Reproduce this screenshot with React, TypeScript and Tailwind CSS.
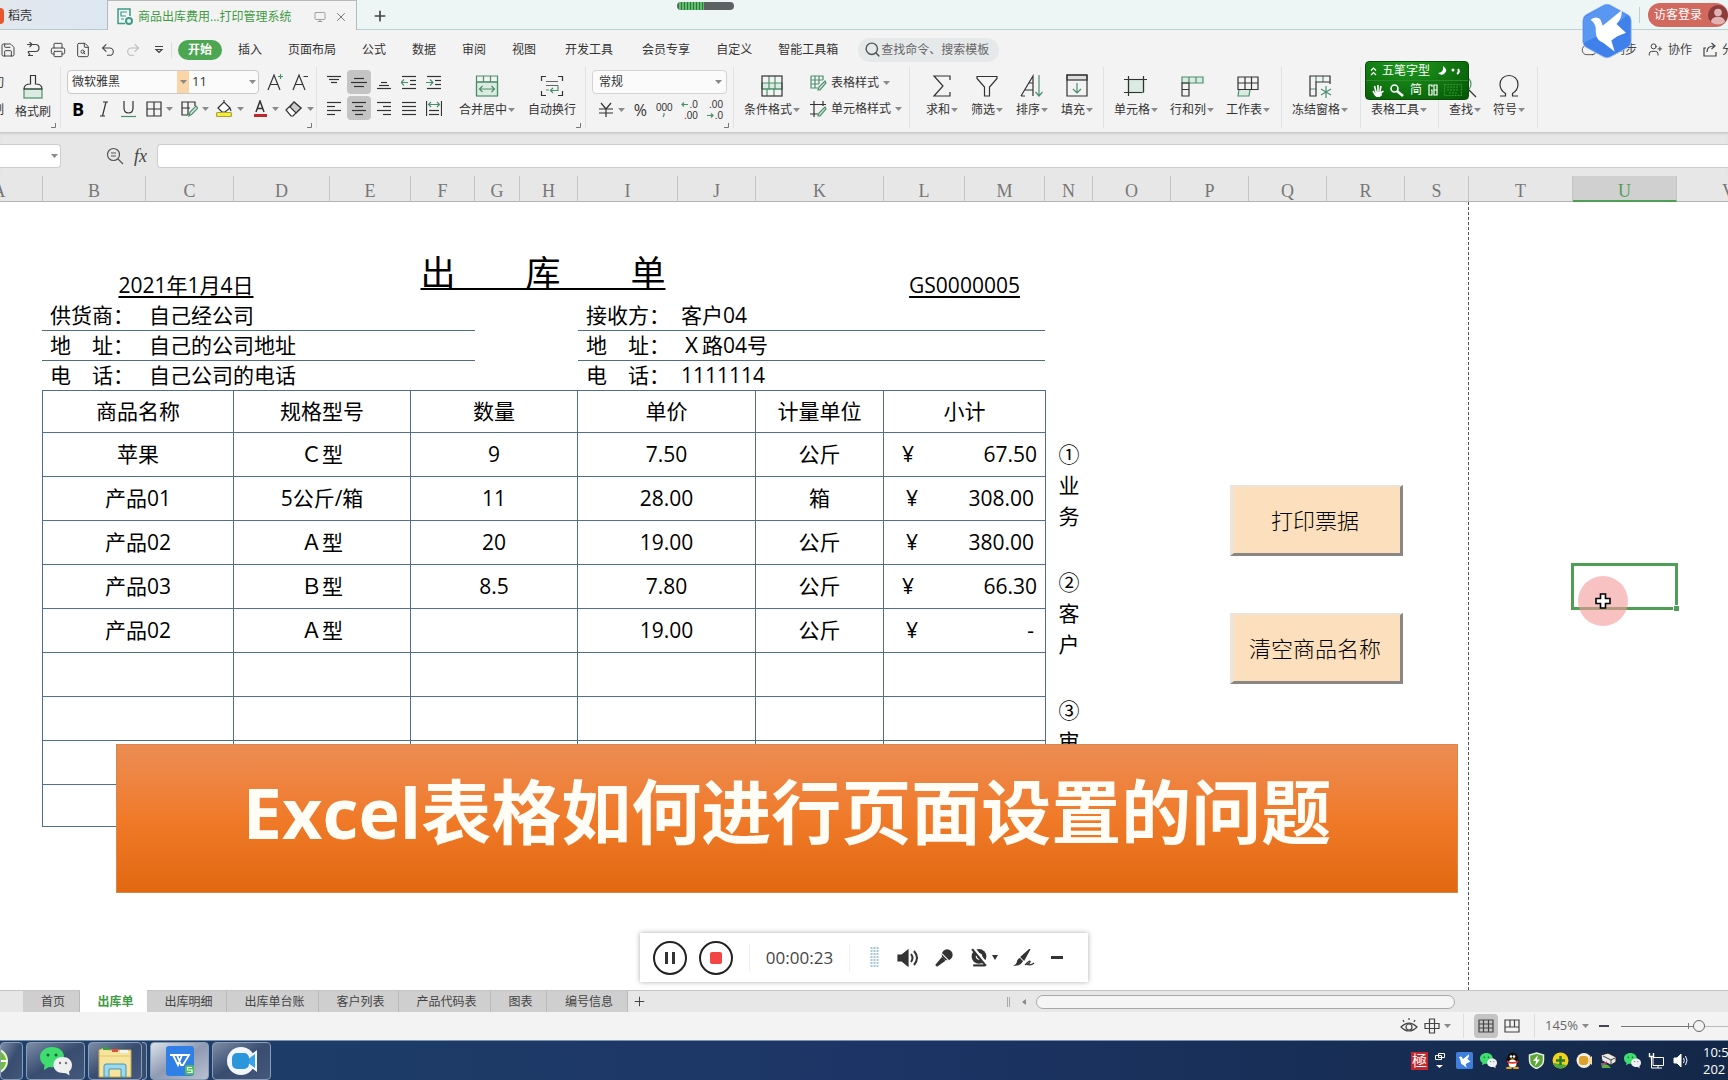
import type { ReactNode } from "react";
import clsx from "clsx";
import { Plus, X, Save, Printer, FileSearch, Undo2, Redo2, Search, Monitor, UserPlus, Cloud } from "lucide-react";

interface IcoProps {
  w?: number;
  h?: number;
  box?: string;
  className?: string;
  children: ReactNode;
}

function Ico({ w = 24, h, box = "0 0 24 24", className, children }: IcoProps) {
  return (
    <svg
      width={w}
      height={h ?? w}
      viewBox={box}
      fill="none"
      stroke="currentColor"
      strokeWidth={1.2}
      className={clsx("shrink-0", className)}
      aria-hidden="true"
    >
      {children}
    </svg>
  );
}

const GREEN = "#4c8f6b";
const MINT = "#dcebe2";

function Caret({ className }: { className?: string }) {
  return (
    <svg width="7" height="4" viewBox="0 0 7 4" className={clsx("shrink-0 fill-[#8a8a8a]", className)} aria-hidden="true">
      <path d="M0 0h7L3.5 4z" />
    </svg>
  );
}

function Corner() {
  return (
    <svg width="5" height="5" viewBox="0 0 5 5" className="absolute right-1 bottom-0 stroke-[#777]" fill="none" aria-hidden="true">
      <path d="M0 4.5h4.5V0" />
    </svg>
  );
}

/* ---------- ribbon icons ---------- */

const icons = {
  brush: (
    <Ico h={26} box="0 0 24 26">
      <rect x="3" y="15" width="18" height="9" fill={MINT} stroke={GREEN} />
      <path d="M9.5 10V1.500h5V10q6.500 0 6.500 5H3q0-5 6.500-5z" />
    </Ico>
  ),
  merge: (
    <Ico>
      <rect x="1.500" y="8" width="21" height="14" fill={MINT} stroke={GREEN} />
      <path d="M1.500 22V2h21v20M1.500 8h21M8.500 2v6M15.500 2v6" stroke={GREEN} />
      <path d="M4.500 15h15M7.500 12l-3 3 3 3M16.500 12l3 3-3 3" stroke={GREEN} />
    </Ico>
  ),
  wrap: (
    <Ico>
      <path d="M1.500 7V2.500H6M18 2.500h4.500V7M1.500 17v4.500H6M18 21.500h4.500V17" />
      <path d="M6 7.500h12M6 11.500h12" stroke="#666" />
      <path d="M18 11.500v5h-7M13 14l-2.500 2.500L13 19M6 16h3" stroke={GREEN} />
    </Ico>
  ),
  condition: (
    <Ico>
      <path d="M2 9h20v6H2z" fill={MINT} stroke={GREEN} />
      <path d="M9 2v7M15 9v6M7 15v7M15 2v7M9 9v6M2 15h20M14 15v7" stroke={GREEN} />
      <rect x="2" y="2" width="20" height="20" />
    </Ico>
  ),
  sum: <Ico><path d="M20 6V2H4l9 10-9 10h16v-4" /></Ico>,
  filter: <Ico><path d="M2 2.500h20v2l-7.500 8.500v9h-5v-9L2 4.500z" /></Ico>,
  sort: (
    <Ico>
      <path d="M1 22L13 2v20M5 16h8M9 9h4M1 22h4" />
      <path d="M19 1v21M15.500 18l3.500 4 3.500-4" stroke={GREEN} />
    </Ico>
  ),
  fill: (
    <Ico>
      <rect x="2" y="1" width="20" height="5" fill="#ddd" />
      <path d="M2 1h20v21H2z" />
      <path d="M12 9v10M8 15l4 4 4-4" stroke={GREEN} />
    </Ico>
  ),
  cell: (
    <Ico>
      <rect x="4.500" y="5.500" width="15" height="13" fill={MINT} stroke={GREEN} />
      <path d="M4.500 2v20M19.500 2v16M0 5.500h23M0 18.500h18" />
    </Ico>
  ),
  rowcol: (
    <Ico>
      <path d="M2 3h21v6H2z" fill={MINT} stroke={GREEN} />
      <path d="M9 3v6M16 3v6" stroke={GREEN} />
      <path d="M2 9h7v13H2zM2 15.500h7" />
    </Ico>
  ),
  sheet: (
    <Ico>
      <path d="M3 15.500h11l-1 6.500H2z" fill={MINT} stroke={GREEN} />
      <path d="M2 3h20v12.500H2zM2 9h20M9 3v12.500M15.500 3v12.500" />
    </Ico>
  ),
  freeze: (
    <Ico>
      <path d="M8 2v6M15 2v6M2 15h6" stroke={GREEN} />
      <path d="M22 10V2H2v20h6V8h14" />
      <path d="M18 12v12M13 15l10 6M23 15l-10 6" stroke={GREEN} />
    </Ico>
  ),
  tools: <Ico><path d="M3 3h18v18H3zM3 9h18M9 3v18" /></Ico>,
  find: (
    <Ico>
      <circle cx="10" cy="10" r="8" stroke={GREEN} />
      <path d="M16 16l7 7" />
    </Ico>
  ),
  omega: <Ico><path d="M3 22h5.500v-2.500C4.500 17 3 14 3 10.500 3 5 7 1.500 12 1.500S21 5 21 10.500c0 3.500-1.500 6.500-5.500 9V22H21" /></Ico>,
};

type Lines = [number, number, number][];

function LineIcon({ lines, children }: { lines: Lines; children?: ReactNode }) {
  return (
    <Ico w={16} box="0 0 16 16">
      {lines.map(([x1, x2, y]) => (
        <path key={y} d={`M${x1} ${y}H${x2}`} />
      ))}
      {children}
    </Ico>
  );
}

const alignTop = [
  { label: "顶端对齐", on: false, icon: <LineIcon lines={[[1, 15, 2.5], [3, 13, 5.5], [5, 11, 8.5]]} /> },
  { label: "垂直居中", on: true, icon: <LineIcon lines={[[3, 13, 4.5], [0, 16, 8.5], [3, 13, 12.5]]} /> },
  { label: "底端对齐", on: false, icon: <LineIcon lines={[[5, 11, 8.5], [3, 13, 11.5], [1, 15, 14.5]]} /> },
  {
    label: "减少缩进",
    on: false,
    icon: (
      <LineIcon lines={[[1, 15, 2.5], [9, 15, 6.5], [9, 15, 10.5], [1, 15, 14.5]]}>
        <path d="M0 8.500h7M3 5.500l-3 3 3 3" stroke={GREEN} />
      </LineIcon>
    ),
  },
  {
    label: "增加缩进",
    on: false,
    icon: (
      <LineIcon lines={[[1, 15, 2.5], [9, 15, 6.5], [9, 15, 10.5], [1, 15, 14.5]]}>
        <path d="M0 8.500h7M4 5.500l3 3-3 3" stroke={GREEN} />
      </LineIcon>
    ),
  },
];

const alignBottom = [
  { label: "左对齐", on: false, icon: <LineIcon lines={[[1, 15, 2.5], [1, 9, 6.5], [1, 15, 10.5], [1, 9, 14.5]]} /> },
  { label: "水平居中", on: true, icon: <LineIcon lines={[[1, 15, 2.5], [4, 12, 6.5], [1, 15, 10.5], [4, 12, 14.5]]} /> },
  { label: "右对齐", on: false, icon: <LineIcon lines={[[1, 15, 2.5], [7, 15, 6.5], [1, 15, 10.5], [7, 15, 14.5]]} /> },
  { label: "两端对齐", on: false, icon: <LineIcon lines={[[1, 15, 2.5], [1, 15, 6.5], [1, 15, 10.5], [1, 15, 14.5]]} /> },
  {
    label: "分散对齐",
    on: false,
    icon: (
      <LineIcon lines={[[3, 13, 10.5], [3, 13, 14.5]]}>
        <path d="M0.500 1v15M15.500 1v15" />
        <path d="M3 4.500h10M5 2L2.500 4.500 5 7M11 2l2.500 2.500L11 7" stroke={GREEN} />
      </LineIcon>
    ),
  },
];

function Group({ className, children, last }: { className?: string; children: ReactNode; last?: boolean }) {
  return (
    <div className={clsx("relative flex h-[61px] shrink-0 border-r border-[#dfe3e3]", last && "pr-3", className)}>
      {children}
    </div>
  );
}

function BigButton({ icon, label, caret = true }: { icon: ReactNode; label: string; caret?: boolean }) {
  return (
    <button className="flex shrink-0 flex-col items-center gap-1 whitespace-nowrap pt-[7px]">
      {icon}
      <span className="flex items-center gap-px leading-4">
        {label}
        {caret && <Caret />}
      </span>
    </button>
  );
}

function TitleBar() {
  return (
    <header className="flex h-[30px] shrink-0 items-end bg-[#eef5f5] text-xs">
      <button className="flex h-full w-[107px] items-center gap-1 border-b border-[#b5cccd] bg-linear-to-r from-[#e3e8ee] to-[#dde7f2] pt-[3px]">
        <span className="h-4 w-1 rounded-r-full bg-[#e8542c]" />
        稻壳
      </button>
      <div className="flex h-full w-[250px] items-center border-x border-t border-[#b5b9ba] bg-[#f3f3f3] pt-0.5 pl-2 text-[#3f9a44]">
        <Ico w={18} box="0 0 18 18" className="text-[#3a9d86]">
          <path d="M9 15.500H2V1h12v7" strokeWidth={1.500} />
          <path d="M11 4H5v4h5M5 11h3" />
          <circle cx="13" cy="13" r="3" strokeWidth={2} />
        </Ico>
        <span className="ml-1 whitespace-nowrap">商品出库费用...打印管理系统</span>
        <Monitor size={12} strokeWidth={1.5} className="ml-[23px] text-[#888]" />
        <button aria-label="关闭标签" className="ml-2">
          <X size={14} strokeWidth={1.5} className="text-[#666]" />
        </button>
      </div>
      <div className="flex h-full flex-1 items-center border-b border-[#b9d3d3] pt-0.5 pl-[15px]">
        <button aria-label="新建标签">
          <Plus size={16} strokeWidth={2.5} className="text-[#444]" />
        </button>
      </div>
      <div className="flex h-full items-center border-b border-[#b9d3d3]">
        <span className="h-4 border-l border-[#b9d3d3]" />
        <button className="ml-2 flex h-6 w-[80px] items-center justify-between rounded-l-full rounded-r-full bg-[#d1695f] pl-1.5 text-white">
          <span className="whitespace-nowrap">访客登录</span>
          <svg width="20" height="20" viewBox="0 0 20 20" aria-hidden="true">
            <circle cx="10" cy="10" r="10" fill="#8d3c3c" />
            <circle cx="10" cy="7.500" r="3.800" fill="#e3b3b3" />
            <path d="M3 17c0-7 14-7 14 0a10 10 0 0 1-14 0z" fill="#e3b3b3" />
          </svg>
        </button>
      </div>
    </header>
  );
}

const menusA = ["插入", "页面布局", "公式", "数据", "审阅", "视图"];
const menusB = ["开发工具", "会员专享"];
const menusC = ["自定义", "智能工具箱"];

function MenuBar() {
  return (
    <nav className="flex h-[37px] shrink-0 items-center whitespace-nowrap pt-0.5 text-xs">
      <div className="flex w-[172px] items-center gap-[9px] border-r border-[#ddd] text-[#444]">
        <button aria-label="保存"><Save size={16} strokeWidth={1.5} /></button>
        <button aria-label="导出">
          <Ico w={16} box="0 0 16 16"><path d="M3 9.500h7.500a3.500 3.500 0 0 0 0-7H2M4.500 0L7 2.500 4.500 5M3 13.500h5M3 9.500l2 4" /></Ico>
        </button>
        <button aria-label="打印"><Printer size={16} strokeWidth={1.5} /></button>
        <button aria-label="打印预览"><FileSearch size={16} strokeWidth={1.5} /></button>
        <button aria-label="撤销"><Undo2 size={16} strokeWidth={1.6} /></button>
        <button aria-label="恢复" className="text-[#bbb]"><Redo2 size={16} strokeWidth={1.6} /></button>
        <button aria-label="更多" className="ml-1">
          <Ico w={10} box="0 0 10 10"><path d="M1 1.500h8M2 4.500L5 7.500l3-3z" /></Ico>
        </button>
      </div>
      <button className="ml-1.5 h-5 w-11 rounded-full bg-[#4da652] font-bold text-white">开始</button>
      <div className="ml-4 flex gap-[26px]">
        {menusA.map((m) => <button key={m}>{m}</button>)}
      </div>
      <div className="ml-[29px] flex gap-[29px]">
        {menusB.map((m) => <button key={m}>{m}</button>)}
      </div>
      <div className="ml-[26px] flex gap-[26px]">
        {menusC.map((m) => <button key={m}>{m}</button>)}
      </div>
      <label className="ml-5 flex h-6 w-[141px] items-center rounded-full bg-[#e6e9ea] pl-1.5">
        <Search size={17} strokeWidth={2} className="shrink-0 text-[#555]" />
        <input
          aria-label="查找命令"
          placeholder="查找命令、搜索模板"
          className="w-full min-w-0 bg-transparent outline-none placeholder:text-[#666]"
        />
      </label>
      <div className="ml-auto flex items-center text-[#444]">
        <Cloud size={16} strokeWidth={1.3} />
        <button className="ml-4">同步</button>
        <UserPlus size={15} strokeWidth={1.6} className="ml-[11px]" />
        <button className="ml-[5px]">协作</button>
        <Ico w={15} box="0 0 15 15" className="ml-[11px]">
          <path d="M3 6H1v8h12v-4M4 10q0-6 7-6M8.500 1L12 4 8.500 7" />
        </Ico>
        <button className="ml-1 w-1.5 overflow-hidden">分</button>
      </div>
    </nav>
  );
}

function Ribbon() {
  return (
    <div className="flex h-[65px] shrink-0 overflow-hidden whitespace-nowrap text-xs text-[#333]">
      <Group className="w-[61px] pl-[15px]">
        <div className="absolute top-2 left-0 flex w-1 flex-col gap-[11px] overflow-hidden leading-4">
          <span className="-ml-2">切</span>
          <span className="-ml-2">制</span>
        </div>
        <BigButton icon={icons.brush} label="格式刷" caret={false} />
        <Corner />
      </Group>

      <Group className="w-64 flex-col pl-1.5">
        <div className="mt-[3px] flex h-6 items-center">
          <div className="flex h-6 w-[192px] rounded-sm border border-[#c9c9c9] bg-[#fbfbfb]">
            <label className="relative flex w-[121px] items-center">
              <select aria-label="字体" className="h-full w-full appearance-none pl-1 outline-none">
                <option>微软雅黑</option>
              </select>
              <span className="pointer-events-none absolute right-0 flex h-full w-3 items-center justify-center bg-[#fad5a5]">
                <Caret />
              </span>
            </label>
            <label className="relative flex flex-1 items-center">
              <select aria-label="字号" className="h-full w-full appearance-none pl-[3px] text-[13px] outline-none">
                <option>11</option>
              </select>
              <Caret className="pointer-events-none absolute right-0.5" />
            </label>
          </div>
          <button aria-label="增大字号" className="ml-2">
            <Ico w={17} h={18} box="0 0 17 18">
              <path d="M1 17L7 2l6 15M3.500 11.500h7" />
              <path d="M11 3.500h5M13.500 1v5" stroke={GREEN} />
            </Ico>
          </button>
          <button aria-label="减小字号" className="ml-2">
            <Ico w={17} h={18} box="0 0 17 18"><path d="M1 17L7 2l6 15M3.500 11.500h7M11.500 3.500H16" /></Ico>
          </button>
        </div>
        <div className="mt-[5px] flex h-5 items-center pl-[5px]">
          <button className="w-5 text-left text-lg leading-5 font-bold text-black">B</button>
          <button aria-label="倾斜" className="ml-1">
            <Ico w={16} h={18} box="0 0 16 18"><path d="M7 2h5M4 16h5M10 2L6.500 16" /></Ico>
          </button>
          <button aria-label="下划线" className="ml-2">
            <Ico w={18} box="0 0 18 18"><path d="M4 1v7q0 5 4.500 5T13 8V1" /><path d="M1 16.500h15" stroke={GREEN} /></Ico>
          </button>
          <button className="ml-2 flex items-center gap-1" aria-label="边框">
            <Ico w={16} box="0 0 16 16"><path d="M1 1h14v14H1zM8 1v14M1 8h14" /></Ico>
            <Caret />
          </button>
          <button className="ml-2 flex items-center gap-1" aria-label="绘制边框">
            <Ico w={17} box="0 0 17 17">
              <path d="M7 14H1V1h13v4M1 7h8M7 1v13" />
              <path d="M8 15l1-4 6-6 2 2-6 6z" fill={MINT} stroke={GREEN} />
            </Ico>
            <Caret />
          </button>
          <button className="ml-1.5 flex items-center gap-1" aria-label="填充颜色">
            <Ico w={18} box="0 0 18 18">
              <path d="M3 8l6-6 6 6-5 4H7zM9 2v-2M15 8l1 3" fill="#fff" />
              <rect x="1.500" y="12.500" width="15" height="4" rx="1" fill="#f6ee3c" stroke="#a9a43a" />
            </Ico>
            <Caret />
          </button>
          <button className="ml-2 flex items-center gap-1" aria-label="字体颜色">
            <Ico w={16} h={18} box="0 0 16 18">
              <path d="M4 12L8 1l4 11M5.500 8.500h5" strokeWidth={1.500} />
              <rect x="2" y="14" width="13" height="3" fill="#c0262d" stroke="none" />
            </Ico>
            <Caret />
          </button>
          <button className="ml-1.5 flex items-center gap-1" aria-label="清除">
            <Ico w={18} box="0 0 18 18">
              <path d="M1 10l8-8 7 6-8 8H6z" fill="#fff" />
              <path d="M9 2l7 6-5 5-6-6z" fill="#ccc" />
            </Ico>
            <Caret />
          </button>
        </div>
        <Corner />
      </Group>

      <Group className="w-[269px] pl-[5px]">
        <div className="flex flex-col gap-0.5 pt-[3px]">
          {[alignTop, alignBottom].map((row, i) => (
            <div key={i} className="flex gap-px">
              {row.map((b) => (
                <button
                  key={b.label}
                  aria-label={b.label}
                  className={clsx("flex h-6 w-6 items-center justify-center rounded-sm", b.on && "bg-[#c4c4c4]")}
                >
                  {b.icon}
                </button>
              ))}
            </div>
          ))}
        </div>
        <div className="ml-[13px] flex gap-[13px]">
          <BigButton icon={icons.merge} label="合并居中" />
          <BigButton icon={icons.wrap} label="自动换行" caret={false} />
        </div>
        <Corner />
      </Group>

      <Group className="w-[148px] flex-col px-1.5">
        <label className="relative mt-[3px] flex h-6 shrink-0 items-center rounded-sm border border-[#d3d3d3] bg-[#fbfbfb]">
          <select aria-label="数字格式" className="h-full w-full appearance-none pl-1.5 outline-none">
            <option>常规</option>
          </select>
          <Caret className="pointer-events-none absolute right-1" />
        </label>
        <div className="mt-[5px] flex h-[22px] items-center justify-between pr-1 pl-1.5">
          <button className="flex items-center gap-1" aria-label="货币">
            <Ico w={16} box="0 0 16 16"><path d="M3 1l5 6 5-6M1 7h14M1 11h14M8 7v8" /></Ico>
            <Caret />
          </button>
          <button className="text-base leading-5">%</button>
          <button aria-label="千位分隔样式" className="h-[22px] font-[Liberation_Sans,sans-serif] text-[10px] leading-[11px]">
            000
            <Ico w={4} h={5} box="0 0 4 5" className="mx-auto"><path d="M2 0v2L1 4" stroke={GREEN} /></Ico>
          </button>
          <button aria-label="增加小数位数" className="flex flex-col items-end font-[Liberation_Sans,sans-serif] text-[10px] leading-[11px]">
            <span className="flex items-center">
              <Ico w={7} h={5} box="0 0 7 5" className="mr-px"><path d="M7 2.500H1M3 .500l-2 2 2 2" stroke={GREEN} /></Ico>
              .0
            </span>
            <span>.00</span>
          </button>
          <button aria-label="减少小数位数" className="flex flex-col items-end font-[Liberation_Sans,sans-serif] text-[10px] leading-[11px]">
            <span>.00</span>
            <span className="flex items-center">
              <Ico w={7} h={5} box="0 0 7 5" className="mr-px"><path d="M0 2.500h6M4 .500l2 2-2 2" stroke={GREEN} /></Ico>
              .0
            </span>
          </button>
        </div>
        <Corner />
      </Group>

      <Group className="w-[176px] pl-2.5">
        <BigButton icon={icons.condition} label="条件格式" />
        <div className="ml-2.5 flex flex-col gap-2 pt-[7px]">
          <button className="flex h-[18px] items-center">
            <Ico w={17} box="0 0 17 17">
              <path d="M1 1h12v4M8 13H1V1M1 5h12M1 9h8M5 1v12M9 1v8" stroke={GREEN} />
              <path d="M8 15l1-3 6-6 1 2-6 7z" fill={MINT} stroke={GREEN} />
            </Ico>
            <span className="mr-1 ml-1">表格样式</span>
            <Caret />
          </button>
          <button className="flex h-[18px] items-center">
            <Ico w={17} box="0 0 17 17">
              <path d="M4 0v16M0 3.500h16M13 0v5M0 13h8" />
              <path d="M8 15l1-3 6-6 1 2-6 7z" fill={MINT} stroke={GREEN} />
            </Ico>
            <span className="mr-1 ml-1">单元格样式</span>
            <Caret />
          </button>
        </div>
      </Group>

      <Group className="w-[194px] gap-[13px] pl-4">
        <BigButton icon={icons.sum} label="求和" />
        <BigButton icon={icons.filter} label="筛选" />
        <BigButton icon={icons.sort} label="排序" />
        <BigButton icon={icons.fill} label="填充" />
      </Group>

      <Group className="w-[178px] gap-3 pl-2.5">
        <BigButton icon={icons.cell} label="单元格" />
        <BigButton icon={icons.rowcol} label="行和列" />
        <BigButton icon={icons.sheet} label="工作表" />
      </Group>

      <Group className="w-[79px] pl-2.5"><BigButton icon={icons.freeze} label="冻结窗格" /></Group>
      <Group className="w-[78px] pl-2.5"><BigButton icon={icons.tools} label="表格工具" /></Group>
      <Group last className="gap-3 pl-2.5">
        <BigButton icon={icons.find} label="查找" />
        <BigButton icon={icons.omega} label="符号" />
      </Group>
    </div>
  );
}

function FormulaBar() {
  return (
    <div className="flex h-11 shrink-0 items-center bg-[#e7e7e7] pt-1 shadow-[inset_0_3px_3px_-2px_#bbb]">
      <button aria-label="名称框" className="flex h-6 w-[61px] items-center justify-end rounded-r-sm border border-l-0 border-[#cdcdcd] bg-white pr-0.5">
        <Caret />
      </button>
      <Ico w={18} box="0 0 18 18" className="ml-[45px] text-[#555]">
        <circle cx="7.500" cy="7.500" r="6" />
        <path d="M12 12l5 5M5 6h5M5 9h5" />
      </Ico>
      <label htmlFor="fx" className="mr-2 ml-2.5 w-[15px] font-[Liberation_Serif,serif] text-lg leading-5 text-[#444] italic">
        fx
      </label>
      <input id="fx" className="h-6 min-w-0 flex-1 rounded-l-sm border border-r-0 border-[#cdcdcd] bg-white outline-none" />
    </div>
  );
}

const letters = "ABCDEFGHIJKLMNOPQRSTUV".split("");

function ColumnHeads() {
  return (
    <div className="grid h-[26px] shrink-0 grid-cols-[43px_103px_88px_96px_81px_64px_45px_58px_100px_78px_128px_81px_80px_48px_78px_78px_78px_78px_64px_104px_104px_104px] overflow-hidden bg-[#e7e7e7] font-[Liberation_Serif,serif] text-lg leading-[31px] text-[#777]">
      {letters.map((l) => (
        <div
          key={l}
          className={clsx(
            "h-[26px] border-r border-b text-center",
            l === "A" && "-ml-11",
            l === "U"
              ? "border-r-[#c4c4c4] border-b-2 border-b-[#4f9e55] bg-[#d0d0d0] text-[#4f9e55]"
              : "border-r-[#c4c4c4] border-b-[#b4b4b4]"
          )}
        >
          {l}
        </div>
      ))}
    </div>
  );
}

/* ---------- delivery note ---------- */

interface Item {
  name: string;
  spec: string;
  qty: string;
  price: string;
  unit: string;
  total: string;
  pad: string;
}

const wide = "pr-2 pl-[18px]";
const narrow = "pr-[11px] pl-[22px]";

const items: Item[] = [
  { name: "苹果", spec: "Ｃ型", qty: "9", price: "7.50", unit: "公斤", total: "67.50", pad: wide },
  { name: "产品01", spec: "5公斤/箱", qty: "11", price: "28.00", unit: "箱", total: "308.00", pad: narrow },
  { name: "产品02", spec: "Ａ型", qty: "20", price: "19.00", unit: "公斤", total: "380.00", pad: narrow },
  { name: "产品03", spec: "Ｂ型", qty: "8.5", price: "7.80", unit: "公斤", total: "66.30", pad: wide },
  { name: "产品02", spec: "Ａ型", qty: "", price: "19.00", unit: "公斤", total: "-", pad: narrow },
];

const heads = ["商品名称", "规格型号", "数量", "单价", "计量单位", "小计"];

const sender = [
  ["供货商：", "自己经公司"],
  ["地　址：", "自己的公司地址"],
  ["电　话：", "自己公司的电话"],
];
const receiver = [
  ["接收方：", "客户04"],
  ["地　址：", "Ｘ路04号"],
  ["电　话：", "1111114"],
];

function Party({ rows, className, term }: { rows: string[][]; className: string; term: string }) {
  return (
    <dl className={className}>
      {rows.map(([k, v]) => (
        <div key={k} className="flex h-[30px] items-center border-b border-[#4f6f80] pb-0.5 last:h-[29px] last:border-b-0">
          <dt className={clsx("pl-2", term)}>{k}</dt>
          <dd className="pl-[9px]">{v}</dd>
        </div>
      ))}
    </dl>
  );
}

const cell = "border border-[#4f6f90] pb-0.5";

function DeliveryNote() {
  return (
    <section className="w-[1003px] shrink-0 text-[21px] leading-7 text-black">
      <div className="grid h-[99px] grid-cols-[288px_426px_128px_161px] items-end text-center">
        <span className="pb-0.5 underline decoration-2 underline-offset-3">2021年1月4日</span>
        <h1 className="pb-1 text-[35px] leading-[48px] font-normal whitespace-pre underline decoration-2 underline-offset-2">出　　库　　单</h1>
        <span />
        <span className="pb-0.5 underline decoration-2 underline-offset-3">GS0000005</span>
      </div>
      <div className="flex">
        <Party rows={sender} className="w-[433px]" term="w-[98px]" />
        <Party rows={receiver} className="ml-[103px] w-[467px]" term="w-[94px]" />
      </div>
      <table className="w-full table-fixed border-collapse text-center">
        <colgroup>
          <col className="w-[191px]" />
          <col className="w-[177px]" />
          <col className="w-[167px]" />
          <col className="w-[178px]" />
          <col className="w-[128px]" />
          <col className="w-[162px]" />
        </colgroup>
        <thead>
          <tr className="h-[42px]">
            {heads.map((h) => (
              <th key={h} className={clsx(cell, "font-normal")}>{h}</th>
            ))}
          </tr>
        </thead>
        <tbody>
          {items.map((it, i) => (
            <tr key={i} className="h-11">
              {[it.name, it.spec, it.qty, it.price, it.unit].map((v, j) => (
                <td key={j} className={cell}>{v}</td>
              ))}
              <td className={clsx(cell, it.pad)}>
                <div className="flex justify-between">
                  <span>¥</span>
                  <span>{it.total}</span>
                </div>
              </td>
            </tr>
          ))}
          {[0, 1, 2, 3].map((i) => (
            <tr key={i} className="h-11 last:h-[42px]">
              {heads.map((h) => <td key={h} className={cell} />)}
            </tr>
          ))}
        </tbody>
      </table>
    </section>
  );
}

const copies = [
  ["①", "业", "务"],
  ["②", "客", "户"],
  ["③", "审"],
];

function Worksheet() {
  return (
    <main className="relative flex min-h-0 flex-1 overflow-hidden bg-white pl-[42px]">
      <DeliveryNote />
      <div className="flex w-12 shrink-0 flex-col gap-[35px] pt-[237px] text-center text-[21px] leading-[31px] text-black">
        {copies.map((c) => (
          <div key={c[0]}>
            {c.map((t) => <div key={t}>{t}</div>)}
          </div>
        ))}
      </div>
      <div className="flex w-[376px] shrink-0 flex-col items-start gap-[57px] border-r border-dashed border-[#555] pt-[283px] pl-[137px]">
        {["打印票据", "清空商品名称"].map((t) => (
          <button
            key={t}
            className="h-[71px] w-[173px] border-t-2 border-r-3 border-b-3 border-l-4 border-t-[#ece4da] border-r-[#8a8683] border-b-[#8a8683] border-l-[#ece4da] bg-[#fcdfbc] pr-1 text-[22px] font-light text-black"
          >
            {t}
          </button>
        ))}
      </div>

      {/* active cell and pointer */}
      <div className="absolute top-[361px] left-[1571px] h-[47px] w-[107px] border-3 border-[#4f9e55]">
        <span className="absolute -right-1 -bottom-1 h-[6px] w-[6px] border-t border-l border-white bg-[#4f9e55]" />
      </div>
      <div className="absolute top-[374px] left-[1578px] flex h-[50px] w-[50px] items-center justify-center rounded-full bg-[#f59a9a]/60">
        <Ico w={16} box="0 0 16 16" className="text-black">
          <path d="M5.500 1h5v4.500H15v5h-4.500V15h-5v-4.500H1v-5h4.500z" fill="#fff" strokeWidth={1.600} />
        </Ico>
      </div>

      {/* caption */}
      <div className="absolute top-[542px] right-[270px] left-[116px] flex h-[149px] items-center justify-center border border-[#d9874a] bg-linear-to-b from-[#ec8c52] via-[#f07a28] to-[#e2680f] pb-3.5">
        <p className="text-[70px] leading-none font-bold whitespace-nowrap text-[#fffdf6]">Excel表格如何进行页面设置的问题</p>
      </div>
    </main>
  );
}

function Recorder() {
  return (
    <div className="absolute bottom-[98px] left-1/2 flex h-[49px] w-[448px] -translate-x-1/2 items-center bg-white pl-[13px] text-[#333] shadow-[0_0_5px_#aaa]">
      <button aria-label="暂停" className="flex h-[34px] w-[34px] items-center justify-center gap-1 rounded-full border-2 border-[#222]">
        <span className="h-3 w-[3px] bg-[#333]" />
        <span className="h-3 w-[3px] bg-[#333]" />
      </button>
      <button aria-label="停止" className="ml-3 flex h-[34px] w-[34px] items-center justify-center rounded-full border-2 border-[#222]">
        <span className="h-3 w-3 rounded-xs bg-[#f44545]" />
      </button>
      <span className="ml-4 h-7 border-l border-[#f0f0f0]" />
      <time className="w-[99px] text-center text-[17px] text-[#444]">00:00:23</time>
      <span className="h-7 border-l border-[#f0f0f0]" />
      <svg width="9" height="21" viewBox="0 0 9 21" className="ml-5 shrink-0" aria-hidden="true">
        {[1, 4, 7].map((x) => (
          <path key={x} d={`M${x + 0.5} 0v21`} stroke="#a9c5d6" strokeWidth="2" strokeDasharray="2 1" />
        ))}
      </svg>
      <button aria-label="声音" className="ml-[18px]">
        <Ico w={22} h={18} box="0 0 22 18">
          <path d="M1 6h4l6-5v16l-6-5H1z" fill="currentColor" />
          <path d="M14 5q3 4 0 8M17 2q6 7 0 14" strokeWidth={2} />
        </Ico>
      </button>
      <button aria-label="麦克风" className="ml-4">
        <Ico w={18} box="0 0 17 17">
          <circle cx="11.500" cy="5.500" r="5.200" fill="currentColor" stroke="none" />
          <path d="M6.500 8.500L9 11l-7 5-1-1z" fill="currentColor" />
          <path d="M5.500 3.500l8 8" stroke="#fff" strokeWidth={1} />
        </Ico>
      </button>
      <button aria-label="摄像头" className="ml-[17px] flex items-center gap-1">
        <Ico w={18} h={19} box="0 0 17 18">
          <circle cx="8.500" cy="8" r="7" fill="currentColor" stroke="none" />
          <circle cx="8.500" cy="8" r="2.500" stroke="#fff" />
          <path d="M3 16.500h11" strokeWidth={2} />
          <path d="M3 0l13 16" stroke="#fff" strokeWidth={3.200} />
          <path d="M2 1l13 16" strokeWidth={2} />
        </Ico>
        <svg width="6" height="5" viewBox="0 0 6 5" className="fill-[#333]" aria-hidden="true"><path d="M0 0h6L3 5z" /></svg>
      </button>
      <button aria-label="画笔" className="ml-[15px]">
        <Ico w={22} h={18} box="0 0 22 18">
          <path d="M17 0L8 8l3 3z" fill="currentColor" />
          <path d="M7 9l3 3q-2 5-10 5 4-2 4-5 1-3 3-3z" fill="currentColor" stroke="none" />
          <path d="M12 16q6-6 5-3t-4 2q5 2 8-1" />
        </Ico>
      </button>
      <button aria-label="最小化" className="ml-4 h-[3px] w-3 bg-[#333]" />
    </div>
  );
}

const sheetTabs = [
  { label: "首页", w: "w-[57px]" },
  { label: "出库单", w: "w-[67px]" },
  { label: "出库明细", w: "w-[80px]" },
  { label: "出库单台账", w: "w-[92px]" },
  { label: "客户列表", w: "w-[80px]" },
  { label: "产品代码表", w: "w-[92px]" },
  { label: "图表", w: "w-[56px]" },
  { label: "编号信息", w: "w-[81px]" },
];

function SheetTabs() {
  return (
    <div className="flex h-[22px] shrink-0 items-stretch border-t border-[#c4c4c4] bg-[#e7e7e7] pl-[23px] text-xs whitespace-nowrap text-[#444]">
      {sheetTabs.map((t) => (
        <button
          key={t.label}
          className={clsx(
            "pt-px pl-1",
            t.w,
            t.label === "出库单" ? "-mt-px bg-white font-bold text-[#3f9a44]" : "border-r border-[#b9b9b9] bg-[#cfcfcf]"
          )}
        >
          {t.label}
        </button>
      ))}
      <button aria-label="新建工作表" className="pl-1">
        <Plus size={15} strokeWidth={1.6} />
      </button>
      <div className="ml-auto flex w-[721px] items-center">
        <span className="h-2.5 w-[3px] border-x border-[#aaa]" />
        <svg width="4" height="6" viewBox="0 0 4 6" className="ml-3 fill-[#888]" aria-hidden="true"><path d="M4 0v6L0 3z" /></svg>
        <span className="ml-2.5 h-3.5 w-[419px] rounded-full border border-[#a9a9a9] bg-[#f5f5f5]" />
      </div>
    </div>
  );
}

function StatusBar() {
  return (
    <footer className="flex h-7 shrink-0 items-center justify-end bg-[#f3f3f3] text-[#444]">
      <button aria-label="护眼模式">
        <Ico w={18} box="0 0 18 18"><path d="M1 10q8-8 16 0-8 8-16 0zM3 3l1 2M9 1v2M15 3l-1 2" /><circle cx="9" cy="10" r="3" /></Ico>
      </button>
      <button aria-label="阅读模式" className="ml-1.5 flex items-center gap-1">
        <Ico w={16} box="0 0 16 16"><path d="M5.500 1h5v14h-5zM1 5.500h14v5H1z" /></Ico>
        <Caret />
      </button>
      <span className="ml-3 h-6 border-l border-[#ddd]" />
      <button aria-label="普通视图" className="ml-2.5 flex h-6 w-6 items-center justify-center rounded-sm bg-[#c4c4c4]">
        <Ico w={16} h={14} box="0 0 16 14"><path d="M1 1h14v12H1zM1 5h14M1 9h14M5.500 1v12M10.500 1v12" /></Ico>
      </button>
      <button aria-label="页面布局" className="ml-1.5">
        <Ico w={16} h={14} box="0 0 16 14"><path d="M1 1h14v12H1zM6 1v7h9M1 8h5M10.500 1v7" /></Ico>
      </button>
      <span className="ml-3.5 h-6 border-l border-[#ddd]" />
      <button className="ml-2.5 flex items-center gap-1 text-[13px] text-[#666]">
        145%
        <Caret />
      </button>
      <button aria-label="缩小" className="ml-2.5 h-0.5 w-2.5 bg-[#445]" />
      <label className="relative ml-3 flex h-4 w-[107px] items-center overflow-hidden">
        <input type="range" aria-label="缩放比例" defaultValue={73} className="absolute inset-0 opacity-0" />
        <span className="h-px w-[72px] bg-[#777]" />
        <span className="h-3 w-3 shrink-0 rounded-full border border-[#666] bg-[#f3f3f3]" />
        <span className="h-px flex-1 bg-[#bbb]" />
        <span className="absolute left-[67px] h-1.5 border-l border-[#777]" />
      </label>
    </footer>
  );
}

function WeChat({ size }: { size: number }) {
  return (
    <svg width={size} height={size} viewBox="0 0 32 32" aria-hidden="true">
      <path d="M12 2C5 2 0 6.500 0 12c0 3.500 1.500 6 4.500 8L4 25l5-3c9 1.500 15-3.500 15-10C24 6 19 2 12 2z" fill="#3fdc70" />
      <path d="M23 12c-6 0-9.500 3.500-9.500 8s4 8 9.500 8l3 .300 3.500 2.200-.500-4c2-1.500 3-4 3-6.500 0-4.500-4-8-9-8z" fill="#eef0f2" />
      <circle cx="8" cy="10" r="1.500" fill="#17693a" />
      <circle cx="16" cy="10" r="1.500" fill="#17693a" />
      <circle cx="20" cy="18" r="1.200" fill="#777" />
      <circle cx="26" cy="18" r="1.200" fill="#777" />
    </svg>
  );
}

const BIRD = "M10 19q6-5 11-1 2 4 3 8L46 8q1 9-6 16l11 10-10 4-7 5 4 13-13-10q-9-3-9-13 1-9-6-14z";

function TaskIcon({ label, active, className, children }: { label: string; active?: boolean; className?: string; children: ReactNode }) {
  return (
    <button
      aria-label={label}
      className={clsx(
        "flex h-[38px] items-center justify-center rounded-sm border border-[#8a9db8] bg-linear-to-br",
        active ? "from-[#dde3ea] via-[#8f9bb3] to-[#b9c1cf]" : "from-[#7d8da6] via-[#394d70] to-[#44587c]",
        className ?? "w-[59px]"
      )}
    >
      {children}
    </button>
  );
}

function Taskbar() {
  return (
    <div className="flex h-10 shrink-0 items-center gap-[3px] overflow-hidden border-t border-[#7d93ad] bg-linear-to-r from-[#1d4068] via-[#1d3566] to-[#132848] text-white">
      <TaskIcon label="浏览器" className="w-[23px] justify-start">
        <svg width="12" height="28" viewBox="0 0 12 28" className="mr-auto" aria-hidden="true">
          <circle cx="-6" cy="14" r="12" fill="#6fc22f" stroke="#e9f5dc" strokeWidth="2" />
          <path d="M-6 14H6" stroke="#fff" strokeWidth="2" />
        </svg>
      </TaskIcon>
      <TaskIcon label="微信"><WeChat size={32} /></TaskIcon>
      <div className="flex w-[59px]">
        <TaskIcon label="文件夹" className="w-[54px]">
          <svg width="34" height="34" viewBox="0 0 34 34" aria-hidden="true">
            <path d="M1 6l7-3 3 3h22v27H1z" fill="#f6e39c" stroke="#c9a94c" />
            <path d="M1 12h32" stroke="#e0c56c" />
            <path d="M5 3h6v3H5z" fill="#2f9d4b" />
            <path d="M14 5h6v3h-6z" fill="#d8523f" />
            <path d="M22 6h8v3h-8z" fill="#eef3f6" />
            <path d="M6 33V22q0-2 2-2h18q2 0 2 2v11h-5v-8H11v8z" fill="#9bd9ec" stroke="#4a93b5" />
          </svg>
        </TaskIcon>
        <span className="h-[38px] w-[5px] rounded-r-sm border border-l-0 border-[#8a9db8] bg-[#394d70]" />
      </div>
      <TaskIcon label="WPS 表格" active>
        <svg width="30" height="32" viewBox="0 0 30 32" aria-hidden="true">
          <rect x="1" y="1" width="28" height="30" rx="3" fill="#2f7fe6" />
          <path d="M5 10h12M17 10l-4 10-5-10M12 10l4 10h2l6-10h-7" fill="none" stroke="#fff" strokeWidth="1.800" />
          <rect x="20" y="20" width="9" height="10" rx="2" fill="#4dbb5e" />
          <path d="M27 22.500h-4.500V25H27v2.500h-4.500" fill="none" stroke="#fff" strokeWidth="1.200" />
        </svg>
      </TaskIcon>
      <TaskIcon label="录屏">
        <svg width="32" height="30" viewBox="0 0 32 30" aria-hidden="true">
          <circle cx="15" cy="15" r="14" fill="#f2f6fa" />
          <path d="M22 12l8-6v18l-8-6z" fill="#38a3e6" stroke="#f2f6fa" strokeWidth="2" />
          <rect x="6" y="7" width="17" height="16" rx="5" fill="#2b96dc" />
        </svg>
      </TaskIcon>

      <div className="ml-auto flex items-center gap-[7px]">
        <span className="flex h-[18px] w-[17px] items-center justify-center bg-[#c2272d] text-[15px] leading-none">極</span>
        <svg width="10" height="16" viewBox="0 0 10 16" className="mr-1" fill="none" stroke="#fff" aria-hidden="true">
          <path d="M3.500 .500h6v4h-6zM.500 2.500h6v4h-6z" />
          <path d="M1 12h7l-3.500 3z" fill="#fff" stroke="none" />
        </svg>
        <svg width="17" height="17" viewBox="0 0 60 60" aria-hidden="true">
          <rect width="60" height="60" rx="6" fill="#3e7edc" />
          <path d={BIRD} fill="#fff" />
        </svg>
        <WeChat size={17} />
        <svg width="17" height="17" viewBox="0 0 17 17" aria-hidden="true">
          <ellipse cx="8.500" cy="8" rx="6" ry="7.500" fill="#111" />
          <ellipse cx="8.500" cy="11.500" rx="4" ry="4" fill="#fff" />
          <path d="M3 8.500q5.500 3 11 0v2q-5.500 2.500-11 0z" fill="#e2332d" />
          <ellipse cx="5" cy="16" rx="3" ry="1.300" fill="#f0a020" />
          <ellipse cx="12" cy="16" rx="3" ry="1.300" fill="#f0a020" />
          <circle cx="7" cy="4.500" r="1.300" fill="#fff" />
          <circle cx="10" cy="4.500" r="1.300" fill="#fff" />
          <path d="M6 6.500h5L8.500 8z" fill="#f0a020" />
        </svg>
        <svg width="17" height="17" viewBox="0 0 17 17" aria-hidden="true">
          <path d="M8.500 1l7 2v5q0 6-7 8.500Q1.500 14 1.500 8V3z" fill="#5aa637" stroke="#e6efe0" strokeWidth="1.500" />
          <path d="M10 3L5 9h3l-1 5 5-6.500H9z" fill="#fff" />
        </svg>
        <svg width="17" height="17" viewBox="0 0 17 17" aria-hidden="true">
          <circle cx="8.500" cy="8.500" r="8" fill="#f2d21f" />
          <path d="M1 11a8 8 0 0 0 14 2z" fill="#4aa83c" />
          <path d="M8.500 4v9M4 8.500h9" stroke="#2c7a2c" strokeWidth="2.500" />
        </svg>
        <svg width="17" height="17" viewBox="0 0 17 17" aria-hidden="true">
          <circle cx="8" cy="8.500" r="7.500" fill="#f5f0e2" />
          <path d="M12 7l4-3v9l-4-3z" fill="#f5d9a0" />
          <rect x="3" y="4" width="9" height="9" rx="3" fill="#dea12e" />
        </svg>
        <svg width="17" height="17" viewBox="0 0 17 17" aria-hidden="true">
          <path d="M1 3l7-2 8 4v5l-5 3-9-4z" fill="#e8e8e8" stroke="#222" />
          <path d="M3 4l8 4 4-2M11 8v4" fill="none" stroke="#444" />
          <path d="M1 11l7 2 3 3H2z" fill="#5ab045" />
          <path d="M2 13l5-3" stroke="#c43b8d" strokeWidth="1.500" />
        </svg>
        <WeChat size={17} />
        <svg width="17" height="17" viewBox="0 0 17 17" fill="none" stroke="#fff" aria-hidden="true">
          <path d="M5 5.500h10.500v8H5zM7 16h7M10 13.500V16M3.500 7v9H7" />
          <path d="M1.500 1v3.500h4V1M3.500 4.500V8" strokeWidth="1.400" />
        </svg>
        <svg width="17" height="17" viewBox="0 0 17 17" fill="none" stroke="#fff" aria-hidden="true">
          <path d="M2 6h3l4-4v13l-4-4H2z" fill="#fff" />
          <path d="M11.500 6q1.500 2.500 0 5M13.500 4q3 4.500 0 9" />
        </svg>
      </div>
      <time className="ml-[11px] w-[25px] overflow-hidden text-[13px] leading-[17px] whitespace-nowrap">
        10:5
        <br />
        202
      </time>
    </div>
  );
}

function ImePanel() {
  return (
    <div className="absolute top-[61px] left-[1365px] h-[39px] w-[104px] rounded-sm border border-[#0a4d0a] bg-radial-[at_40%_0%] from-[#1f9c1f] to-[#045404] text-[13px] leading-[19px] text-white">
      <div className="flex h-[19px] items-center border-b border-[#2c8a2c] pl-1">
        <Ico w={7} h={10} box="0 0 7 10"><path d="M1 4.500L3.500 2 6 4.500M1 9l2.500-2.500L6 9" /></Ico>
        <span className="ml-[5px] text-xs whitespace-nowrap">五笔字型</span>
        <Ico w={9} h={10} box="0 0 9 10" className="ml-2"><path d="M5 0q6 4 1 8-3 2-6-1 6 0 5-7z" fill="currentColor" stroke="none" /></Ico>
        <Ico w={9} h={10} box="0 0 9 10" className="ml-1">
          <circle cx="2" cy="4" r="1.500" fill="currentColor" stroke="none" />
          <path d="M7 3q2 3-1 5" strokeWidth={2} />
        </Ico>
      </div>
      <div className="flex h-[18px] items-center gap-1.5 pl-1.5">
        <Ico w={12} h={13} box="0 0 12 13">
          <path d="M4 12L1 7M4 8L2.500 2M6 7V1M8 7l1-5M9 9l2.500-2M4 8h5v3l-2 1.500H5z" fill="currentColor" strokeWidth={1.600} />
        </Ico>
        <Ico w={14} h={13} box="0 0 14 13"><circle cx="4.500" cy="4.500" r="3.500" strokeWidth={1.600} /><path d="M7 7l6 5" strokeWidth={2.500} /></Ico>
        <span className="text-xs">简</span>
        <Ico w={10} h={12} box="0 0 10 12"><path d="M4 3V1H1v10h3V6H3M6 1h3v10H6zM6 6h3" /></Ico>
        <Ico w={18} h={12} box="0 0 18 12" className="text-[#2f9a2f]"><path d="M.500.500h17v11H.500zM3 3h12M3 6h12M5 9h8" strokeDasharray="2 1" /></Ico>
      </div>
    </div>
  );
}

function BirdBadge() {
  return (
    <svg width="50" height="56" viewBox="0 0 58 64" className="absolute top-[3px] right-24" aria-hidden="true">
      <path d="M25 2q4-2 8 0l20 11q4 2 4 7v24q0 5-4 7L33 62q-4 2-8 0L5 51q-4-2-4-7V20q0-5 4-7z" fill="#3f80ea" stroke="#8db6f4" />
      <path d="M25 3q4-2 8 0l19 11L29 32 2 46V20q0-4 4-6z" fill="#5a97f3" />
      <path d={BIRD} fill="#fff" />
    </svg>
  );
}

export default function App() {
  return (
    <div className="relative flex h-screen flex-col overflow-hidden bg-[#f3f3f3] font-[Open_Sans,Noto_Sans_CJK_SC,sans-serif] text-[#333]">
      <TitleBar />
      <MenuBar />
      <Ribbon />
      <FormulaBar />
      <ColumnHeads />
      <Worksheet />
      <SheetTabs />
      <StatusBar />
      <Taskbar />

      {/* floating windows */}
      <div className="absolute top-0.5 left-[677px] flex h-2 w-[57px] overflow-hidden rounded-full bg-[#5d6164] pl-0.5">
        <span className="w-[25px] bg-[repeating-linear-gradient(90deg,#58c26a_0_2px,#3c6b46_2px_3px)]" />
      </div>
      <ImePanel />
      <BirdBadge />
      <Recorder />
    </div>
  );
}
